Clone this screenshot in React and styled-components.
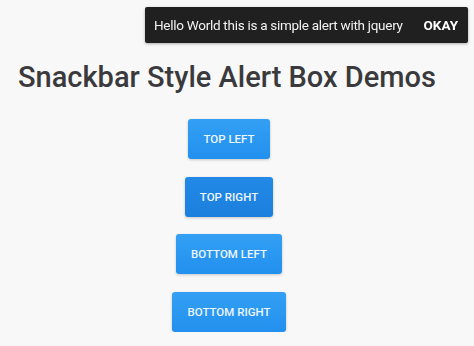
import React from "react";
import styled, { createGlobalStyle } from "styled-components";

const GlobalStyle = createGlobalStyle`
  html, body {
    margin: 0;
    padding: 0;
    background: #f8f8f8;
    font-family: Roboto, "Liberation Sans", sans-serif;
  }
`;

const Page = styled.div`
  width: 458px;
  padding: 60px 0 0 18px;
  box-sizing: border-box;
`;

const Title = styled.h1`
  margin: 0;
  font-size: 29px;
  font-weight: 500;
  line-height: 34px;
  color: #3a3a3c;
  white-space: nowrap;
`;

const ButtonList = styled.div`
  display: flex;
  flex-direction: column;
  align-items: center;
  gap: 17.5px;
  margin: 25px 0 0 -18px;
`;

const DemoButton = styled.button`
  height: 40px;
  padding: 0 15px;
  border: none;
  border-radius: 3px;
  background: ${(p) =>
    p.$active
      ? "linear-gradient(#2389e6, #1b7fdd)"
      : "linear-gradient(#33a0f4, #2290ee)"};
  box-shadow: 0 1px 3px rgba(0, 0, 0, 0.2);
  color: #eef6ff;
  font-family: Roboto, "Liberation Sans", sans-serif;
  font-size: 11.5px;
  font-weight: 500;
  text-transform: uppercase;
  cursor: pointer;
`;

const Snackbar = styled.div`
  position: fixed;
  top: 7px;
  right: 6px;
  width: 323px;
  height: 36px;
  box-sizing: border-box;
  padding: 0 10px 0 9px;
  display: flex;
  align-items: center;
  justify-content: space-between;
  background: #202020;
  border-radius: 2px;
  box-shadow: 0 1px 3px rgba(0, 0, 0, 0.3);
`;

const Message = styled.span`
  color: #f2f2f2;
  font-size: 13.5px;
  letter-spacing: -0.28px;
  white-space: nowrap;
`;

const Action = styled.span`
  color: #ffffff;
  font-size: 13.5px;
  font-weight: 700;
`;

export default function App() {
  return (
    <>
      <GlobalStyle />
      <Page>
        <Title>Snackbar Style Alert Box Demos</Title>
        <ButtonList>
          <DemoButton>Top Left</DemoButton>
          <DemoButton $active>Top Right</DemoButton>
          <DemoButton>Bottom Left</DemoButton>
          <DemoButton>Bottom Right</DemoButton>
        </ButtonList>
      </Page>
      <Snackbar>
        <Message>Hello World this is a simple alert with jquery</Message>
        <Action>OKAY</Action>
      </Snackbar>
    </>
  );
}
